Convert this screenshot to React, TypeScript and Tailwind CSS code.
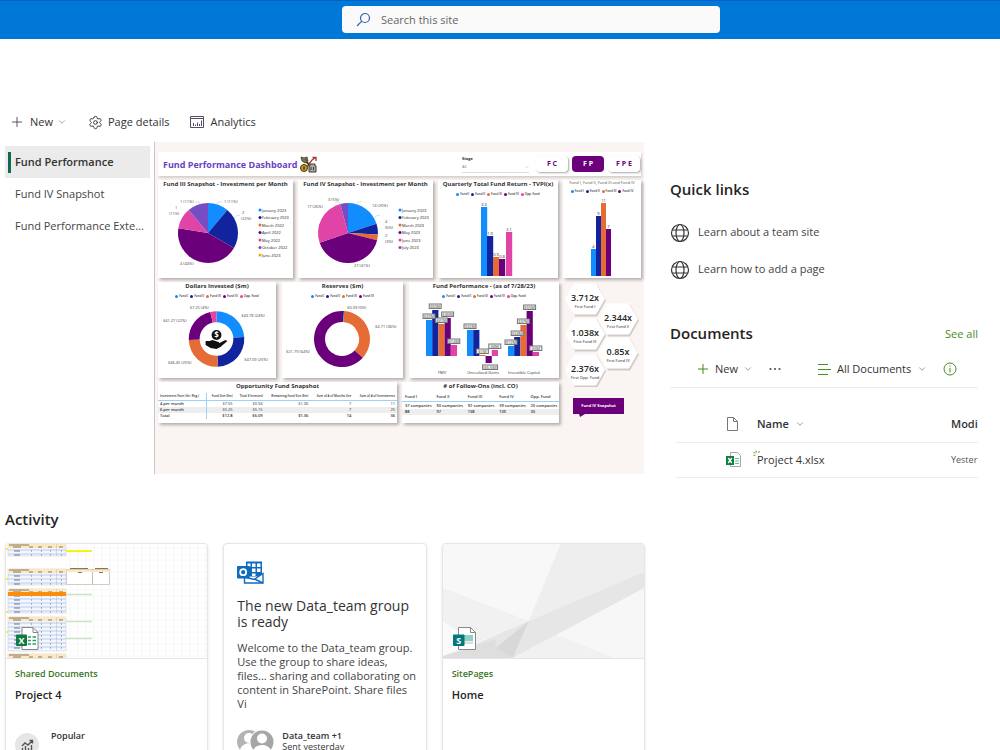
import type { ReactNode } from 'react'
import { ChevronDown, Plus, Settings } from 'lucide-react'

// ─────────────────────────────────────────────
// Types and data
// ─────────────────────────────────────────────

type Slice = { from: number; to: number; color: string }
type Label = { x: number; y: number; text: string }
type Bar = { x: number; top: number; color: string; label: string }

const BLUE   = '#118dff'
const NAVY   = '#12239e'
const ORANGE = '#e66c37'
const PURPLE = '#6b007b'
const PINK   = '#e044a7'
const VIOLET = '#744ec2'
const YELLOW = '#d9b300'

const FUND_COLORS = [BLUE, NAVY, ORANGE, PURPLE, PINK]
const FUND_NAMES  = ['Fund I', 'Fund II', 'Fund III', 'Fund IV', 'Opp. Fund']

const fundThree = {
  slices: [
    { from: 0,   to: 40,  color: BLUE },
    { from: 40,  to: 120, color: NAVY },
    { from: 120, to: 279, color: PURPLE },
    { from: 279, to: 320, color: PINK },
    { from: 320, to: 360, color: VIOLET },
  ],
  labels: [
    { x: 22, y: 12, text: '1 (11%)' },
    { x: 66, y: 12, text: '1 (11%)' },
    { x: 84, y: 23, text: '2' },
    { x: 83, y: 29, text: '(22%)' },
    { x: 17, y: 18, text: '1' },
    { x: 11, y: 24, text: '(11%)' },
    { x: 22, y: 74, text: '4 (44%)' },
  ],
  legend: [
    ['January 2023', BLUE],
    ['February 2023', NAVY],
    ['March 2022', ORANGE],
    ['April 2022', PURPLE],
    ['May 2022', PINK],
    ['October 2022', VIOLET],
    ['June 2023', YELLOW],
  ],
}

const fundFour = {
  slices: [
    { from: 0,   to: 72,  color: BLUE },
    { from: 72,  to: 93,  color: NAVY },
    { from: 93,  to: 104, color: ORANGE },
    { from: 104, to: 251, color: PURPLE },
    { from: 251, to: 345, color: PINK },
    { from: 345, to: 360, color: VIOLET },
  ],
  labels: [
    { x: 30, y: 10, text: '3 (5%)' },
    { x: 9,  y: 17, text: '17 (26%)' },
    { x: 74, y: 16, text: '14 (20%)' },
    { x: 87, y: 32, text: '4' },
    { x: 87, y: 38, text: '(6%)' },
    { x: 87, y: 46, text: '2' },
    { x: 87, y: 52, text: '(3%)' },
    { x: 56, y: 76, text: '27 (41%)' },
  ],
  legend: [
    ['January 2023', BLUE],
    ['February 2023', NAVY],
    ['March 2023', ORANGE],
    ['May 2023', PURPLE],
    ['June 2023', PINK],
    ['July 2023', VIOLET],
  ],
}

const tvpiBars: Bar[] = [
  { x: 43, top: 9,  color: BLUE,   label: '3.3' },
  { x: 49, top: 38, color: NAVY,   label: '1.9' },
  { x: 55, top: 59, color: ORANGE, label: '0.9' },
  { x: 61, top: 61, color: PURPLE, label: '0.8' },
  { x: 68, top: 34, color: PINK,   label: '2.1' },
]

const countBars: Bar[] = [
  { x: 28, top: 51, color: BLUE,   label: '4' },
  { x: 33, top: 18, color: NAVY,   label: '9' },
  { x: 38, top: 5,  color: ORANGE, label: '11' },
  { x: 43, top: 31, color: PURPLE, label: '7' },
]

const performance = [
  { name: 'FMV',               x: 17, tops: [20, 10, 24, 18, 45], labels: ['$43M', '$60M', '$41M', '$46M', '$14M'] },
  { name: 'Unrealized Gains',  x: 58, tops: [30, 30, 55, 63, 50], labels: ['$32M', '', '$1M', '($6.5M)', '$8M'] },
  { name: 'Investible Capital', x: 99, tops: [46, 37, 25, 11, 52], labels: ['$12M', '$24M', '$37M', '$55M', '$5M'] },
]

const multiples = [
  { x: 19, y: 17, value: '3.712x', name: 'First Fund I' },
  { x: 52, y: 37, value: '2.344x', name: 'First Fund II' },
  { x: 19, y: 52, value: '1.038x', name: 'First Fund III' },
  { x: 52, y: 71, value: '0.85x',  name: 'First Fund IV' },
  { x: 19, y: 88, value: '2.376x', name: 'First Opp. Fund' },
]

const snapshotHead = [
  'Investment Pace (thr. Reg.)',
  'Fund Size ($m)',
  'Total $ Invested',
  'Remaining Fund Size ($m)',
  'Sum of # of Months Use',
  'Sum of # of Investments',
]
const snapshotRows = [
  ['4 per month', '$7.55', '$0.94', '$1.36', '7', '11'],
  ['6 per month', '$5.25', '$5.15', '', '7', '25'],
  ['Total', '$12.8', '$6.09', '$1.36', '14', '36'],
]

const followOns = [
  ['37 companies', '50 companies', '92 companies', '39 companies', '20 companies'],
  ['88', '97', '138', '135', '30'],
]

// ─────────────────────────────────────────────
// Chart helpers
// ─────────────────────────────────────────────

function point(cx: number, cy: number, r: number, deg: number) {
  const a = ((deg - 90) * Math.PI) / 180
  return `${(cx + r * Math.cos(a)).toFixed(2)} ${(cy + r * Math.sin(a)).toFixed(2)}`
}

function ring(cx: number, cy: number, r: number, hole: number, s: Slice) {
  const large = s.to - s.from > 180 ? 1 : 0
  return `M${point(cx, cy, r, s.from)} A${r} ${r} 0 ${large} 1 ${point(cx, cy, r, s.to)} L${point(cx, cy, hole, s.to)} A${hole} ${hole} 0 ${large} 0 ${point(cx, cy, hole, s.from)}Z`
}

function ChartLabels({ labels }: { labels: Label[] }) {
  return (
    <g className="fill-[#444] text-[4px]">
      {labels.map((l, i) => <text key={i} x={l.x} y={l.y}>{l.text}</text>)}
    </g>
  )
}

function ChartCard({ title, small, children }: { title: string; small?: boolean; children: ReactNode }) {
  return (
    <section className="min-w-0 overflow-hidden bg-white shadow-[2px_2px_3px_#b3adab]">
      <h3 className={small
        ? 'h-2 whitespace-nowrap text-center text-[4px] leading-[6px] text-[#555]'
        : 'h-[11px] whitespace-nowrap text-center text-[6px] font-bold leading-[9px] text-[#333]'}
      >
        {title}
      </h3>
      {children}
    </section>
  )
}

function FundLegend({ count }: { count: number }) {
  return (
    <ul className="flex h-[7px] items-center justify-center gap-[2px] whitespace-nowrap text-[3px] font-semibold leading-[7px] text-[#333]">
      {FUND_NAMES.slice(0, count).map((name, i) => (
        <li key={name} className="flex items-center gap-px">
          <svg className="size-[3px]" viewBox="0 0 4 4"><circle cx="2" cy="2" r="2" fill={FUND_COLORS[i]} /></svg>
          {name}
        </li>
      ))}
    </ul>
  )
}

function PieChart({ data }: { data: typeof fundThree }) {
  return (
    <svg className="h-[87px] w-full" viewBox="0 0 135 87">
      {data.slices.map(s => <path key={s.from} d={ring(50, 42, 30, 0, s)} fill={s.color} />)}
      <path d="M37 11h4l1 2M64 11h-4l-1 2M82 24l-4 1-2 2" fill="none" stroke="#bbb" strokeWidth=".5" />
      <ChartLabels labels={data.labels} />
      {data.legend.map(([name, color], i) => (
        <g key={name} className="fill-[#222] text-[4px]">
          <circle cx="102" cy={19 + i * 7.5} r="1.5" fill={color} />
          <text x="104" y={20.5 + i * 7.5}>{name}</text>
        </g>
      ))}
    </svg>
  )
}

function DonutChart({ slices, labels, children }: { slices: Slice[]; labels: Label[]; children?: ReactNode }) {
  return (
    <svg className="h-[78px] w-full" viewBox="0 0 119 78">
      {slices.map(s => <path key={s.from} d={ring(59, 39, 28, 17, s)} fill={s.color} />)}
      <ChartLabels labels={labels} />
      {children}
    </svg>
  )
}

function BarChart({ bars, width, barWidth }: { bars: Bar[]; width: number; barWidth: number }) {
  return (
    <svg className="h-20 w-full" viewBox={`0 0 ${width} 80`}>
      {bars.map(b => (
        <g key={b.x}>
          <rect x={b.x} y={b.top} width={barWidth} height={78 - b.top} fill={b.color} />
          <text x={b.x + barWidth / 2} y={b.top - 1} textAnchor="middle" className="fill-[#222] text-[4px]">{b.label}</text>
        </g>
      ))}
    </svg>
  )
}

function PerformanceChart() {
  return (
    <svg className="h-[78px] w-full" viewBox="0 0 150 78">
      {performance.map(g => (
        <g key={g.name}>
          {g.tops.map((top, i) => (
            <rect key={i} x={g.x + i * 6.2} y={Math.min(top, 56)} width="6.2" height={Math.abs(56 - top)} fill={FUND_COLORS[i]} />
          ))}
          {g.tops.map((top, i) => g.labels[i] && (
            <g key={i}>
              <rect x={g.x + i * 6.2 - 3} y={top > 56 ? top + 2 : top - 6} width={top > 56 ? 15 : 12} height="4.5" fill="#eee" stroke="#777" />
              <text x={g.x + i * 6.2 + (top > 56 ? 4.5 : 3)} y={top > 56 ? top + 5.6 : top - 2.4} textAnchor="middle" className="fill-[#555] text-[4px]">{g.labels[i]}</text>
            </g>
          ))}
          <text x={g.x + 16} y="74" textAnchor="middle" className="fill-[#333] text-[4px]">{g.name}</text>
        </g>
      ))}
    </svg>
  )
}

// ─────────────────────────────────────────────
// Dashboard
// ─────────────────────────────────────────────

function MoneyIcon() {
  return (
    <svg className="size-[17px]" viewBox="0 0 17 17" fill="none">
      <path d="M1 1l3 1 3-1 1 4-3 2-3-2z" fill="#5d8a4a" stroke="#3a3a24" strokeWidth=".8" />
      <path d="M5 3l4 5 3-4 3-2M12.500 1.500H16V5" stroke="#a33b3a" strokeWidth="1.300" />
      <path d="M6 6l3 3-3 2" stroke="#3a3a24" strokeWidth="1.200" />
      <path d="M10 8h5v2h1v6H9v-6h1z" fill="#a9aaa0" stroke="#3f3b34" />
      <path d="M11 11v3M13.500 11v3" stroke="#3f3b34" />
      <circle cx="4" cy="12" r="3.500" fill="#c8a11e" stroke="#4a3312" />
      <path d="M4 10v4M2.800 12h2.400" stroke="#4a3312" strokeWidth=".9" />
    </svg>
  )
}

function DashboardHeader() {
  return (
    <header className="mb-1 flex h-6 items-center bg-white pl-[5px] shadow-[1px_2px_2px_#d5cfcc]">
      <h2 className="mr-[3px] whitespace-nowrap pt-px text-[9px] font-bold leading-3 text-[#6b3fc4]">Fund Performance Dashboard</h2>
      <MoneyIcon />
      <div className="ml-auto mr-[7px] flex w-[67px] flex-col">
        <label htmlFor="stage" className="text-[4px] font-bold leading-[6px] text-[#333]">Stage</label>
        <div className="flex items-center border-b border-[#ddd]">
          <select id="stage" className="h-[10px] flex-1 appearance-none text-[4px] leading-[8px] text-[#777]">
            <option>All</option>
          </select>
          <ChevronDown className="size-1 text-[#777]" />
        </div>
      </div>
      <div className="flex gap-1 pr-px text-[7px] font-bold leading-[16px]">
        <button className="w-8 rounded bg-white text-[#6b007b] shadow-[1px_1px_2px_#aaa]">F C</button>
        <button className="w-8 rounded bg-[#6b007b] text-white">F P</button>
        <button className="w-8 rounded bg-white text-[#6b007b] shadow-[1px_1px_2px_#aaa]">F P E</button>
      </div>
    </header>
  )
}

function Multiples() {
  return (
    <svg className="h-[105px] w-full" viewBox="0 0 75 105">
      {multiples.map(m => (
        <g key={m.value} transform={`translate(${m.x} ${m.y})`}>
          <path d="M-10-14.500H12L21 1.500 12 17.500H-10L-17 1.500Z" fill="#d2cbc8" />
          <path d="M-11-15.500H11L20 0 11 15.500H-11L-20 0Z" fill="#fff" />
          <text y="2" textAnchor="middle" className="fill-[#252423] text-[9px] font-semibold">{m.value}</text>
          <text y="9" textAnchor="middle" className="fill-[#222] text-[4px]">{m.name}</text>
        </g>
      ))}
    </svg>
  )
}

function SnapshotTable() {
  return (
    <table className="w-full whitespace-nowrap text-[3px] leading-[6px] text-[#333]">
      <thead>
        <tr className="border-b border-[#9fd0f5]">
          {snapshotHead.map((h, i) => (
            <th key={h} className={`h-[7px] px-[2px] py-0 font-semibold ${i === 0 ? 'border-r border-[#9fd0f5] text-left' : 'text-right'}`}>{h}</th>
          ))}
        </tr>
      </thead>
      <tbody className="text-[4px]">
        {snapshotRows.map((row, r) => (
          <tr key={row[0]} className={r === 1 ? 'bg-[#eee]' : r === 2 ? 'font-semibold' : ''}>
            {row.map((cell, i) => (
              <td key={i} className={`px-[2px] py-0 ${i === 0 ? 'border-r border-[#9fd0f5] font-semibold' : 'text-right'}`}>{cell}</td>
            ))}
          </tr>
        ))}
      </tbody>
    </table>
  )
}

function FollowOnTable() {
  return (
    <table className="w-full table-fixed whitespace-nowrap text-[4px] leading-[6px] text-[#333]">
      <thead>
        <tr className="border-b border-[#9fd0f5]">
          {FUND_NAMES.map(n => <th key={n} className="h-2 pl-[3px] text-left font-semibold">{n}</th>)}
        </tr>
      </thead>
      <tbody>
        <tr className="h-[2px]" />
        {followOns.map((row, r) => (
          <tr key={r} className={r === 1 ? 'bg-[#eee] font-semibold' : 'font-semibold'}>
            {row.map((cell, i) => <td key={i} className="pl-[3px]">{cell}</td>)}
          </tr>
        ))}
      </tbody>
    </table>
  )
}

function Dashboard() {
  return (
    <div className="mr-px min-w-0 flex-1 border-l border-[#c8c6c4] bg-[#faf5f3] px-[3px] pt-[10px] text-[#252423]">
      <DashboardHeader />
      <div className="mb-1 grid grid-cols-[135fr_135fr_120fr_78fr] gap-[5px]">
        <ChartCard title="Fund III Snapshot - Investment per Month"><PieChart data={fundThree} /></ChartCard>
        <ChartCard title="Fund IV Snapshot - Investment per Month"><PieChart data={fundFour} /></ChartCard>
        <ChartCard title="Quarterly Total Fund Return - TVPI(x)">
          <FundLegend count={5} />
          <BarChart bars={tvpiBars} width={120} barWidth={6.2} />
        </ChartCard>
        <ChartCard title="Fund I, Fund II, Fund III and Fund IV" small>
          <FundLegend count={4} />
          <div className="h-[3px]" />
          <BarChart bars={countBars} width={78} barWidth={5} />
        </ChartCard>
      </div>
      <div className="grid grid-cols-[401fr_75fr] gap-[7px]">
        <div className="flex min-w-0 flex-col gap-1">
          <div className="grid grid-cols-[118fr_121fr_150fr] gap-[6px]">
            <ChartCard title="Dollars Invested ($m)">
              <FundLegend count={5} />
              <DonutChart
                slices={[
                  { from: 0,   to: 86,  color: BLUE },
                  { from: 86,  to: 177, color: NAVY },
                  { from: 177, to: 268, color: ORANGE },
                  { from: 268, to: 347, color: PURPLE },
                  { from: 347, to: 360, color: PINK },
                ]}
                labels={[
                  { x: 32, y: 9,  text: '$7.25 (4%)' },
                  { x: 84, y: 17, text: '$43.78 (24%)' },
                  { x: 5,  y: 22, text: '$41.27 (22%)' },
                  { x: 10, y: 64, text: '$46.45 (25%)' },
                  { x: 87, y: 61, text: '$47.09 (25%)' },
                ]}
              >
                <circle cx="59" cy="35" r="5" fill="#111" />
                <text x="59" y="38" textAnchor="middle" className="fill-white text-[8px] font-bold">$</text>
                <path d="M48 41h4l3-1 6 2 1 1 6-3 2 1-7 6-4 2-6-1-5-3z" fill="#111" />
              </DonutChart>
            </ChartCard>
            <ChartCard title="Reserves ($m)">
              <FundLegend count={4} />
              <DonutChart
                slices={[
                  { from: 0,   to: 4,   color: NAVY },
                  { from: 4,   to: 132, color: ORANGE },
                  { from: 132, to: 360, color: PURPLE },
                ]}
                labels={[
                  { x: 64, y: 9,  text: '$0.09 (0%)' },
                  { x: 92, y: 28, text: '$4.71 (36%)' },
                  { x: 3,  y: 53, text: '$21.79 (64%)' },
                ]}
              />
            </ChartCard>
            <ChartCard title="Fund Performance - (as of 7/28/23)">
              <FundLegend count={5} />
              <PerformanceChart />
            </ChartCard>
          </div>
          <div className="grid grid-cols-[239fr_157fr] gap-[5px]">
            <ChartCard title="Opportunity Fund Snapshot">
              <SnapshotTable />
              <div className="h-1" />
            </ChartCard>
            <ChartCard title="# of Follow-Ons (incl. CO)"><FollowOnTable /></ChartCard>
          </div>
        </div>
        <div className="flex flex-col">
          <Multiples />
          <button className="ml-[7px] mt-[11px] h-4 w-[51px] bg-[#6b007b] text-[4px] font-bold leading-[16px] text-white">Fund IV Snapshot</button>
          <svg className="ml-[13px] h-[3px] w-[6px]" viewBox="0 0 6 3"><path d="M0 0h6L1 3z" fill="#6b007b" /></svg>
        </div>
      </div>
    </div>
  )
}

// ─────────────────────────────────────────────
// Icons
// ─────────────────────────────────────────────

function SearchIcon() {
  return (
    <svg className="size-4" viewBox="0 0 16 16" fill="none" stroke="#2f62b5" strokeWidth="1.2">
      <circle cx="9" cy="6" r="4.500" />
      <path d="M5.800 9.200L1 14" />
    </svg>
  )
}

function AnalyticsIcon() {
  return (
    <svg className="h-3 w-[14px]" viewBox="0 0 14 12" fill="none" stroke="#5b4a63">
      <path d="M.5.5h13v11H.5zM.5 2.500h13M3.500 7v3M5.500 8.500V10M7.500 6.500V10M9.500 8v2M11.500 4.500V10" />
    </svg>
  )
}

function GlobeIcon() {
  return (
    <svg className="size-5" viewBox="0 0 20 20" fill="none" stroke="#333" strokeWidth="1.200">
      <circle cx="10" cy="10" r="8.500" />
      <ellipse cx="10" cy="10" rx="4" ry="8.500" />
      <path d="M2.300 7h15.400M2.300 13h15.400" />
    </svg>
  )
}

function FileIcon() {
  return (
    <svg className="h-[14px] w-[11px]" viewBox="0 0 11 14" fill="none" stroke="#777">
      <path d="M.5.5H6.500L10.500 4.500V13.500H.5zM6.500.5V4.500H10.500" />
    </svg>
  )
}

function ExcelIcon({ className }: { className: string }) {
  return (
    <svg className={className} viewBox="0 0 23 23" fill="none">
      <path d="M6 .5h11l5 5v17H6z" fill="#fff" stroke="#888" />
      <path d="M17 .5v5h5" stroke="#888" />
      <path d="M12 10h3M16.500 10h3.500M12 13.500h3M16.500 13.500h3.500M12 17h3M16.500 17h3.500" stroke="#21a366" strokeWidth="1.500" />
      <rect y="7.500" width="11" height="11.500" rx="1" fill="#107c41" />
      <text x="5.500" y="16.500" textAnchor="middle" className="fill-white text-[9px] font-bold">X</text>
    </svg>
  )
}

function SmallExcelIcon() {
  return (
    <svg className="size-[15px]" viewBox="0 0 15 15" fill="none">
      <path d="M4.500.5h7l3 3v11h-10z" fill="#fff" stroke="#a5a5a5" />
      <path d="M9 6.500h4M9 9h4M9 11.500h4" stroke="#5fbf91" />
      <rect y="4" width="8" height="9" fill="#107c41" />
      <path d="M2.200 6l3.600 5M5.800 6l-3.600 5" stroke="#fff" strokeWidth="1.300" />
    </svg>
  )
}

function SharePointIcon() {
  return (
    <svg className="size-[23px]" viewBox="0 0 23 23" fill="none">
      <path d="M5.500.5h12l5 5v17h-17z" fill="#fff" stroke="#888" />
      <path d="M17.500.5v5h5" stroke="#888" />
      <path d="M11 8h9v6h-9z" fill="#8fd0cb" />
      <path d="M11 14.500h9V17h-9z" fill="#ddd" />
      <rect y="7.500" width="11.500" height="11.500" rx="1" fill="#03787c" />
      <text x="5.800" y="16.500" textAnchor="middle" className="fill-white text-[9px] font-bold">S</text>
    </svg>
  )
}

function OutlookIcon() {
  return (
    <svg className="h-[23px] w-[27px]" viewBox="0 0 27 23" fill="none">
      <path d="M9 .5h16v15H9z" fill="#0f6cbd" />
      <path d="M10.500 2.500h3v3h-3zM15 2.500h3.500v3.500H15zM20 2.500h3.500v3.500H20zM15 7.500h3.500V11H15zM20 7.500h3.500V11H20zM15 12.500h3.500V15H15z" fill="#fff" />
      <path d="M7.500 16l9.500 2.500 9-6v9.500H7.500z" fill="#fff" stroke="#0f6cbd" strokeWidth="1.400" />
      <path d="M17.500 18l8.500 4" stroke="#0f6cbd" strokeWidth="1.400" />
      <rect y="5" width="12.500" height="12.500" rx="1" fill="#0f6cbd" />
      <circle cx="6.200" cy="11.200" r="3" stroke="#fff" strokeWidth="1.800" />
    </svg>
  )
}

function TrendIcon() {
  return (
    <svg className="size-6 shrink-0" viewBox="0 0 24 24" fill="none" stroke="#555">
      <circle cx="12" cy="12" r="12" fill="#e6e6e6" stroke="none" />
      <path d="M7 13l3-3 3 2 4-4M14.500 7.500h3V10.500M7.500 15v5M10.500 13v7M13.500 15v5M16.500 12v8" strokeWidth="1.400" />
    </svg>
  )
}

function AvatarPair() {
  return (
    <svg className="h-6 w-[37px] shrink-0" viewBox="0 0 37 24">
      <circle cx="12" cy="12" r="12" fill="#b3b3b3" />
      <circle cx="12" cy="8" r="5" fill="#fff" />
      <path d="M3 20c2-9 16-9 18 0v4H3z" fill="#fff" />
      <circle cx="25" cy="12" r="12.500" fill="#fff" />
      <circle cx="25" cy="12" r="11.500" fill="#a6a6a6" />
      <circle cx="25" cy="8.500" r="5" fill="#fff" />
      <path d="M16 21c2-8 16-8 18 0v3H16z" fill="#fff" />
    </svg>
  )
}

// ─────────────────────────────────────────────
// Activity card pictures
// ─────────────────────────────────────────────

const sheetBlocks = [
  { y: 0, h: 12 },
  { y: 25, h: 16 },
  { y: 45, h: 24 },
  { y: 73, h: 34 },
  { y: 110, h: 5 },
]

function SheetThumbnail() {
  return (
    <svg className="block h-[114px] w-full" viewBox="0 0 202 114" preserveAspectRatio="xMinYMin slice">
      <rect width="202" height="114" fill="#fff" />
      {Array.from({ length: 18 }, (_, i) => <path key={i} d={`M${64 + i * 8} 0V114`} stroke="#f6f6f6" />)}
      {Array.from({ length: 19 }, (_, i) => <path key={i} d={`M60 ${i * 6 + 4}H202`} stroke="#f8f8f8" />)}
      {sheetBlocks.map(b => (
        <g key={b.y}>
          <rect x="2" y={b.y} width="58" height={b.h} fill="#f3f6fc" stroke="#c2c6d0" strokeWidth=".5" />
          <rect x="2" y={b.y} width="58" height="4" fill="#fbe8c0" />
          {Array.from({ length: Math.floor((b.h - 4) / 4) }, (_, i) => (
            <g key={i}>
              <path d={`M2 ${b.y + 6 + i * 4}H60`} stroke="#cddaf3" strokeWidth="1.500" />
              <path d={`M8 ${b.y + 7 + i * 4}h6M25 ${b.y + 7 + i * 4}h1M35 ${b.y + 7 + i * 4}h1M44 ${b.y + 7 + i * 4}h1M55 ${b.y + 7 + i * 4}h1`} stroke="#6c7587" />
            </g>
          ))}
          <path d={`M3 ${b.y + 1}h20M7 ${b.y + 3}h8M23 ${b.y + 3}h4M32 ${b.y + 3}h4M42 ${b.y + 3}h4M53 ${b.y + 3}h4`} stroke="#8a7650" />
          <path d={`M50.500 ${b.y}v${b.h}`} stroke="#b7bccb" strokeWidth=".5" />
        </g>
      ))}
      <rect x="2" y="48" width="58" height="4" fill="#fb8c0d" />
      <path d="M60 7h26" stroke="#f7f312" strokeWidth="2" />
      <path d="M0 5h2M0 35h2M0 68h2M0 88h2" stroke="#f7f312" strokeWidth="2" />
      <path d="M60 50.500h26M60 77.500h26M60 94.500h26" stroke="#cbe3c5" strokeWidth="1.500" />
      <path d="M60.500 25.500h26v15h-26zM86.500 25.500h17v15h-17z" fill="#fff" stroke="#b5ae9d" strokeWidth=".6" />
      <path d="M60.500 26h43v2h-43z" fill="#fbe8c0" />
      <path d="M64 24.500h18M89 24.500h13M72 28.500h4M93 28.500h4" stroke="#8a7650" />
    </svg>
  )
}

function PageThumbnail() {
  return (
    <svg className="block h-[114px] w-full" viewBox="0 0 202 114" preserveAspectRatio="none">
      <rect width="202" height="114" fill="#f8f8f8" />
      <path d="M118 0H202V30L86 77z" fill="#eeeeee" />
      <path d="M0 44L86 77 0 112z" fill="#f1f1f1" />
      <path d="M0 77L30 98 0 112z" fill="#fafafa" />
      <path d="M202 28V44L70 114H0L86 77z" fill="#e6e6e6" />
      <path d="M86 77L70 114 53 104z" fill="#d8d8d8" />
      <path d="M0 112L53 95V104L70 114H0z" fill="#dedede" />
      <path d="M202 44V114H172L114 91z" fill="#f7f7f7" />
      <path d="M114 91L172 114H70z" fill="#f1f1f1" />
    </svg>
  )
}

function FileCard({ folder, name, picture, icon, children }: {
  folder: string
  name: string
  picture: ReactNode
  icon: ReactNode
  children?: ReactNode
}) {
  return (
    <article className="h-[230px] overflow-hidden rounded-sm border border-[#e6e6e6] bg-white shadow-sm">
      <div className="relative border-b border-[#e6e6e6]">
        {picture}
        <div className="absolute bottom-2 left-[10px]">{icon}</div>
      </div>
      <div className="px-[9px] pt-2">
        <a href="#folder" className="block text-[9px] font-semibold leading-[14px] text-[#38761d]">{folder}</a>
        <h3 className="mt-[6px] text-[11px] font-semibold leading-4 text-[#252423]">{name}</h3>
        {children}
      </div>
    </article>
  )
}

function Activity() {
  return (
    <section>
      <h2 className="mb-[12px] mt-[34px] text-[15px] font-semibold leading-[23px] text-[#252423]">Activity</h2>
      <div className="grid grid-cols-3 gap-[15px]">
        <FileCard
          folder="Shared Documents"
          name="Project 4"
          picture={<SheetThumbnail />}
          icon={<ExcelIcon className="size-[23px]" />}
        >
          <div className="mt-[26px] flex gap-3">
            <div className="pt-1"><TrendIcon /></div>
            <p className="text-[9px] font-semibold leading-[14px] text-[#333]">Popular</p>
          </div>
        </FileCard>
        <article className="h-[230px] overflow-hidden rounded-sm border border-[#e6e6e6] bg-white pl-[13px] pr-2 pt-[17px] shadow-sm">
          <OutlookIcon />
          <h3 className="mt-[14px] text-[14px] leading-4 text-[#333]">The new Data_team group is ready</h3>
          <p className="mt-[11px] text-[11px] leading-[14px] text-[#444]">
            Welcome to the Data_team group. Use the group to share ideas, files... sharing and collaborating on content in SharePoint. Share files
            <br />
            Vi
          </p>
          <div className="mt-[19px] flex gap-2">
            <AvatarPair />
            <div className="text-[9px] leading-[11px] text-[#333]">
              <p className="font-semibold">Data_team +1</p>
              <p>Sent yesterday</p>
            </div>
          </div>
        </article>
        <FileCard folder="SitePages" name="Home" picture={<PageThumbnail />} icon={<SharePointIcon />} />
      </div>
    </section>
  )
}

// ─────────────────────────────────────────────
// Page chrome
// ─────────────────────────────────────────────

function CommandBar() {
  return (
    <div className="flex h-5 items-center pl-1 text-[11px] leading-5 text-[#333]">
      <button className="flex items-center">
        <Plus className="mr-[5px] size-4" strokeWidth={1.2} />
        New
        <ChevronDown className="ml-1 size-[10px] text-[#999]" />
      </button>
      <button className="ml-[21px] flex items-center gap-[5px]">
        <Settings className="size-[15px]" strokeWidth={1.5} />
        Page details
      </button>
      <button className="ml-[21px] flex items-center gap-[6px]">
        <AnalyticsIcon />
        Analytics
      </button>
    </div>
  )
}

function PageNav() {
  const pages = ['Fund IV Snapshot', 'Fund Performance Exte...']
  return (
    <nav className="w-[149px] shrink-0 pr-[4px] pt-1 text-[11px] leading-8 text-[#444]">
      <a href="#fund-performance" className="flex h-8 items-center bg-[#ebebeb] pl-[3px] font-semibold text-[#333]">
        <span className="mr-[4px] h-[21px] w-[3px] bg-[#0b6a4f]" />
        Fund Performance
      </a>
      {pages.map(p => <a key={p} href="#page" className="block h-8 whitespace-nowrap pl-[10px]">{p}</a>)}
    </nav>
  )
}

function QuickLinks() {
  const links = ['Learn about a team site', 'Learn how to add a page']
  return (
    <section>
      <h2 className="text-[15px] font-semibold leading-5 text-[#252423]">Quick links</h2>
      <ul className="mt-[15px]">
        {links.map(l => (
          <li key={l} className="h-[37px]">
            <a href="#learn" className="flex h-[37px] items-center gap-2 text-[11px] text-[#444]"><GlobeIcon />{l}</a>
          </li>
        ))}
      </ul>
    </section>
  )
}

function Documents() {
  return (
    <section className="mt-[34px] text-[#333]">
      <div className="flex items-center justify-between">
        <h2 className="text-[15px] font-semibold leading-5 text-[#252423]">Documents</h2>
        <a href="#all" className="pt-[2px] text-[11px] leading-5 text-[#4b8a22]">See all</a>
      </div>
      <div className="mt-[7px] flex h-[37px] items-center border-b border-[#ececec] pl-[25px] text-[11px] leading-5">
        <button className="flex items-center">
          <Plus className="mr-1 size-4 text-[#4b8a22]" strokeWidth={1.5} />
          New
          <ChevronDown className="ml-[5px] size-[10px] text-[#888]" />
        </button>
        <button aria-label="More" className="ml-4">
          <svg className="h-1 w-3" viewBox="0 0 12 4" fill="#555"><circle cx="1.500" cy="2" r="1.100" /><circle cx="6" cy="2" r="1.100" /><circle cx="10.500" cy="2" r="1.100" /></svg>
        </button>
        <button className="ml-[36px] flex items-center">
          <svg className="mr-[6px] h-[11px] w-[14px]" viewBox="0 0 14 11" stroke="#4b8a22"><path d="M1 .5h10M1 5.500h13M1 10.500h10" /></svg>
          All Documents
          <ChevronDown className="ml-[6px] size-[10px] text-[#888]" />
        </button>
        <button aria-label="Details" className="ml-4">
          <svg className="size-[14px]" viewBox="0 0 14 14" fill="none" stroke="#4b8a22"><circle cx="7" cy="7" r="6" /><path d="M7 6v4.500M7 3.500v1.200" /></svg>
        </button>
      </div>
      <div className="pl-[6px] pt-[18px]">
        <table className="w-full table-fixed whitespace-nowrap text-left text-[11px] leading-5">
          <thead>
            <tr className="h-9 border-b border-[#ececec]">
              <th className="w-[81px] pl-[51px]"><FileIcon /></th>
              <th className="font-semibold"><span className="inline-flex items-center gap-[6px]">Name <ChevronDown className="size-[10px] text-[#888]" /></span></th>
              <th className="w-[27px] font-semibold">Modi</th>
            </tr>
          </thead>
          <tbody>
            <tr className="h-[35px] border-b border-[#ececec]">
              <td className="pl-[50px]"><SmallExcelIcon /></td>
              <td>
                <a href="#file" className="relative">
                  <svg className="absolute -left-1 -top-[2px] size-[7px]" viewBox="0 0 7 7" stroke="#6aa32f" fill="none"><path d="M.5 2.500l2 .5M3 .5l.5 2M6.500 1l-1 2M.5 5.500l2-.5" /></svg>
                  Project 4.xlsx
                </a>
              </td>
              <td className="w-[27px] text-[9px] text-[#555]">Yester</td>
            </tr>
          </tbody>
        </table>
      </div>
    </section>
  )
}

export default function App() {
  return (
    <div className="h-screen overflow-hidden bg-white font-['Open_Sans','Noto_Sans',sans-serif]">
      <header className="flex h-[39px] justify-center border-t border-[#0062c4] bg-[#0078d7] pl-[62px] pt-[5px]">
        <label className="flex h-[27px] w-[378px] items-center gap-[9px] rounded bg-[#fafafa] pl-[14px]">
          <SearchIcon />
          <input type="search" aria-label="Search this site" placeholder="Search this site" className="flex-1 text-[11px] leading-5 text-[#555] outline-none placeholder:text-[#666]" />
        </label>
      </header>
      <div className="flex pr-[22px] pt-[73px]">
        <main className="min-w-0 flex-1 pl-[5px]">
          <CommandBar />
          <div className="mt-[10px] flex h-[332px]">
            <PageNav />
            <Dashboard />
          </div>
          <Activity />
        </main>
        <aside className="ml-[25px] w-[308px] shrink-0 pt-[67px]">
          <QuickLinks />
          <Documents />
        </aside>
      </div>
    </div>
  )
}
